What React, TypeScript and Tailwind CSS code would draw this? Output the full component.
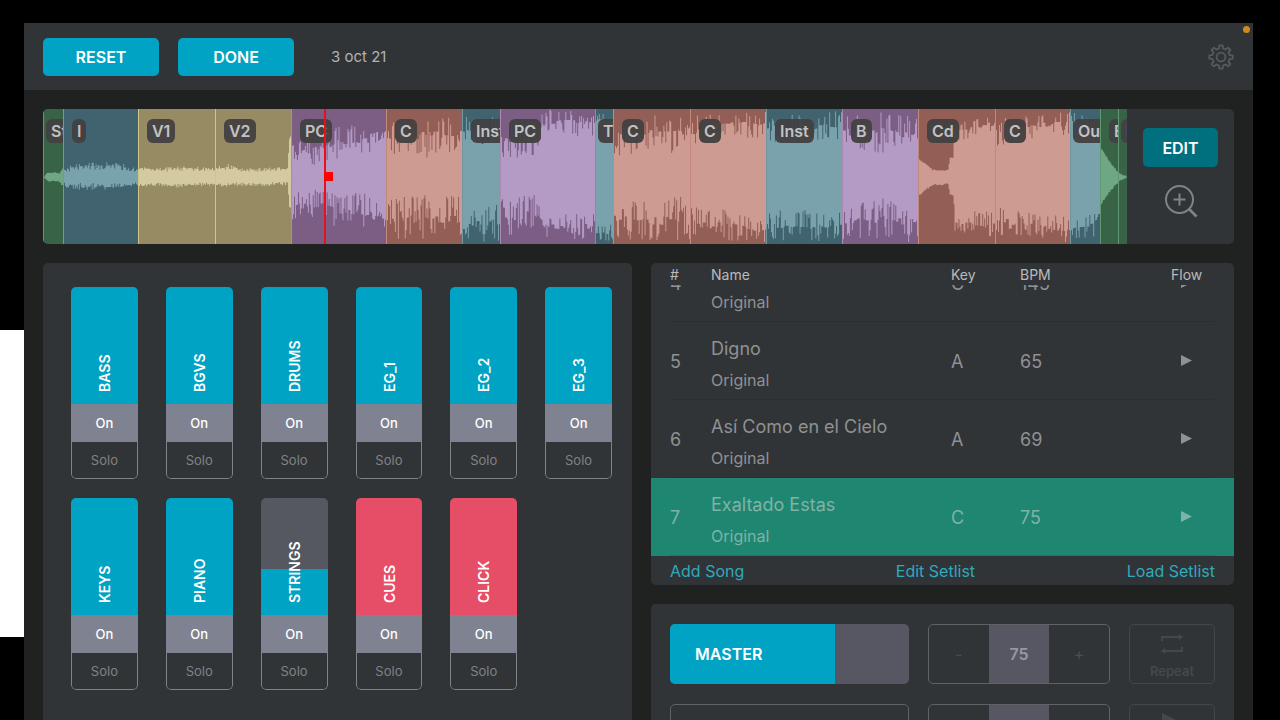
type Range = [number, number];

// one point of the envelope: position inside the section, then the quiet and loud peak above and below the middle
type Point = { x: number; up: Range; down: Range };

type Section = {
  label: string;
  width: number;
  tint: string;
  wave: string;
  narrow?: boolean;
  points: Point[];
};

const MIDDLE = 68;

const tints = {
  green: "border-[#5f9873] bg-[#386346]",
  blue: "border-[#7297a1] bg-[#40636f]",
  sand: "border-[#cfc48c] bg-[#978b63]",
  purple: "border-[#a98bb0] bg-[#7c5e84]",
  red: "border-[#c4877c] bg-[#935e55]",
};

const waves = {
  green: "fill-[#6fa684]",
  blue: "fill-[#79a2ac]",
  sand: "fill-[#d3caa0]",
  purple: "fill-[#b39bc5]",
  red: "fill-[#cd9b92]",
};

const sections: Section[] = [
  { label: "St", width: 20, tint: tints.green, wave: waves.green, narrow: true, points: [
    { x: 0, up: [0, 1], down: [0, 1] },
    { x: 4, up: [4, 5], down: [3, 5] },
    { x: 16, up: [3, 5], down: [3, 5] },
    { x: 20, up: [7, 10], down: [7, 10] },
  ] },
  { label: "I", width: 75, tint: tints.blue, wave: waves.blue, points: [
    { x: 0, up: [5, 10], down: [5, 10] },
    { x: 18, up: [7, 15], down: [6, 14] },
    { x: 56, up: [7, 15], down: [6, 13] },
    { x: 75, up: [5, 9], down: [5, 9] },
  ] },
  { label: "V1", width: 77, tint: tints.sand, wave: waves.sand, points: [
    { x: 0, up: [7, 11], down: [7, 10] },
    { x: 20, up: [5, 9], down: [5, 9] },
    { x: 38, up: [6, 12], down: [7, 11] },
    { x: 77, up: [5, 9], down: [5, 9] },
  ] },
  { label: "V2", width: 76, tint: tints.sand, wave: waves.sand, points: [
    { x: 0, up: [6, 10], down: [6, 10] },
    { x: 12, up: [7, 13], down: [6, 10] },
    { x: 24, up: [5, 9], down: [5, 9] },
    { x: 73, up: [6, 10], down: [5, 10] },
    { x: 74, up: [38, 42], down: [30, 34] },
    { x: 76, up: [38, 42], down: [30, 34] },
  ] },
  { label: "PC", width: 95, tint: tints.purple, wave: waves.purple, points: [
    { x: 0, up: [12, 34], down: [11, 46] },
    { x: 32, up: [12, 44], down: [11, 46] },
    { x: 45, up: [18, 52], down: [14, 50] },
    { x: 80, up: [20, 52], down: [16, 54] },
    { x: 82, up: [34, 52], down: [24, 54] },
    { x: 95, up: [36, 56], down: [30, 56] },
  ] },
  { label: "C", width: 76, tint: tints.red, wave: waves.red, points: [
    { x: 0, up: [24, 54], down: [22, 66] },
    { x: 34, up: [18, 62], down: [18, 64] },
    { x: 76, up: [26, 62], down: [18, 64] },
  ] },
  { label: "Inst", width: 38, tint: tints.blue, wave: waves.blue, points: [
    { x: 0, up: [34, 60], down: [32, 66] },
    { x: 38, up: [28, 60], down: [22, 64] },
  ] },
  { label: "PC", width: 95, tint: tints.purple, wave: waves.purple, points: [
    { x: 0, up: [18, 54], down: [18, 62] },
    { x: 34, up: [20, 54], down: [18, 54] },
    { x: 46, up: [42, 68], down: [36, 62] },
    { x: 95, up: [40, 66], down: [34, 64] },
  ] },
  { label: "Tr", width: 18, tint: tints.blue, wave: waves.blue, narrow: true, points: [
    { x: 0, up: [48, 66], down: [46, 64] },
    { x: 18, up: [46, 64], down: [46, 64] },
  ] },
  { label: "C", width: 77, tint: tints.red, wave: waves.red, points: [
    { x: 0, up: [20, 62], down: [20, 62] },
    { x: 70, up: [24, 62], down: [20, 66] },
    { x: 77, up: [38, 67], down: [32, 66] },
  ] },
  { label: "C", width: 76, tint: tints.red, wave: waves.red, points: [
    { x: 0, up: [26, 62], down: [28, 64] },
    { x: 30, up: [40, 64], down: [32, 64] },
    { x: 76, up: [38, 66], down: [40, 66] },
  ] },
  { label: "Inst", width: 76, tint: tints.blue, wave: waves.blue, points: [
    { x: 0, up: [34, 62], down: [32, 64] },
    { x: 76, up: [36, 67], down: [34, 64] },
  ] },
  { label: "B", width: 76, tint: tints.purple, wave: waves.purple, points: [
    { x: 0, up: [28, 60], down: [24, 62] },
    { x: 36, up: [24, 66], down: [20, 62] },
    { x: 76, up: [22, 60], down: [20, 66] },
  ] },
  { label: "Cd", width: 77, tint: tints.red, wave: waves.red, points: [
    { x: 0, up: [17, 19], down: [17, 19] },
    { x: 9, up: [11, 12], down: [10, 12] },
    { x: 14, up: [6, 8], down: [7, 9] },
    { x: 30, up: [6, 8], down: [6, 8] },
    { x: 31, up: [18, 20], down: [16, 18] },
    { x: 35, up: [18, 20], down: [18, 20] },
    { x: 36, up: [36, 52], down: [36, 54] },
    { x: 77, up: [40, 66], down: [32, 64] },
  ] },
  { label: "C", width: 75, tint: tints.red, wave: waves.red, points: [
    { x: 0, up: [30, 60], down: [26, 60] },
    { x: 28, up: [38, 64], down: [34, 58] },
    { x: 75, up: [40, 66], down: [40, 66] },
  ] },
  { label: "Out", width: 30, tint: tints.blue, wave: waves.blue, narrow: true, points: [
    { x: 0, up: [44, 66], down: [44, 62] },
    { x: 29, up: [36, 62], down: [32, 62] },
    { x: 30, up: [28, 30], down: [26, 28] },
  ] },
  { label: "E", width: 18, tint: tints.green, wave: waves.green, points: [
    { x: 0, up: [28, 30], down: [26, 28] },
    { x: 9, up: [15, 16], down: [14, 16] },
    { x: 18, up: [4, 6], down: [4, 6] },
  ] },
  { label: "E", width: 9, tint: tints.green, wave: waves.green, narrow: true, points: [
    { x: 0, up: [3, 5], down: [3, 5] },
    { x: 9, up: [0, 1], down: [0, 1] },
  ] },
];

const total = sections.reduce((sum, section) => sum + section.width, 0);

const noise = (n: number) => {
  const value = Math.sin(n * 127.1 + 3.7) * 43758.5453;
  return value - Math.floor(value);
};

const mix = (a: Range, b: Range, t: number): Range => [
  a[0] + (b[0] - a[0]) * t,
  a[1] + (b[1] - a[1]) * t,
];

const envelope = (points: Point[], x: number) => {
  const next = Math.max(1, points.findIndex((p) => p.x >= x));
  const a = points[next - 1];
  const b = points[next];
  const t = (x - a.x) / (b.x - a.x);
  return { up: mix(a.up, b.up, t), down: mix(a.down, b.down, t) };
};

const peak = ([low, high]: Range, seed: number) => {
  const spike = noise(seed);
  // most columns stay around the body of the sound, a few dip or jump
  if (spike > 0.78) return low + (high - low) * (0.7 + noise(seed + 9) * 0.3);
  if (spike < 0.28) return low + (high - low) * noise(seed + 5) * 0.35;
  return low + (high - low) * (0.42 + noise(Math.floor(seed / 3)) * 0.2);
};

const wavePath = (section: Section, seed: number) => {
  let top = "";
  let bottom = "";
  for (let x = 0; x < section.width; x++) {
    const { up, down } = envelope(section.points, x + 0.5);
    const y1 = (MIDDLE - peak(up, seed + x)).toFixed(1);
    const y2 = (MIDDLE + peak(down, seed + x + 4000)).toFixed(1);
    top += `L${x} ${y1}L${x + 1} ${y1}`;
    bottom = `L${x + 1} ${y2}L${x} ${y2}` + bottom;
  }
  return `M0 ${MIDDLE}${top}${bottom}Z`;
};

const tracks = [
  { name: "BASS", level: 100, color: "bg-[#00a3c4]" },
  { name: "BGVS", level: 100, color: "bg-[#00a3c4]" },
  { name: "DRUMS", level: 100, color: "bg-[#00a3c4]" },
  { name: "EG_1", level: 100, color: "bg-[#00a3c4]" },
  { name: "EG_2", level: 100, color: "bg-[#00a3c4]" },
  { name: "EG_3", level: 100, color: "bg-[#00a3c4]" },
  { name: "KEYS", level: 100, color: "bg-[#00a3c4]" },
  { name: "PIANO", level: 100, color: "bg-[#00a3c4]" },
  { name: "STRINGS", level: 39, color: "bg-[#00a3c4]" },
  { name: "CUES", level: 100, color: "bg-[#e64d66]" },
  { name: "CLICK", level: 100, color: "bg-[#e64d66]" },
];

const songs = [
  { id: 4, name: "", key: "C", bpm: 145 },
  { id: 5, name: "Digno", key: "A", bpm: 65 },
  { id: 6, name: "Así Como en el Cielo", key: "A", bpm: 69 },
  { id: 7, name: "Exaltado Estas", key: "C", bpm: 75, active: true },
];

const gearPath = () => {
  const parts: string[] = [];
  for (let i = 0; i < 8; i++) {
    const at = (deg: number, r: number) => {
      const a = ((i * 45 + deg - 90) * Math.PI) / 180;
      return `${(13 + Math.cos(a) * r).toFixed(2)} ${(13 + Math.sin(a) * r).toFixed(2)}`;
    };
    parts.push(`${at(-13, 8.8)}L${at(-8, 11.8)}L${at(8, 11.8)}L${at(13, 8.8)}`);
  }
  return `M${parts.join("L")}Z`;
};

const GearIcon = () => (
  <svg viewBox="0 0 26 26" className="size-[26px]" fill="none" stroke="currentColor" strokeWidth="1.8" strokeLinejoin="round">
    <path d={gearPath()} />
    <circle cx="13" cy="13" r="4.4" />
  </svg>
);

const ZoomIcon = () => (
  <svg viewBox="0 0 34 34" className="size-[34px]" fill="none" stroke="currentColor" strokeWidth="2">
    <circle cx="15.5" cy="15.5" r="13.5" />
    <path d="M15.5 9.5v12M9.5 15.5h12" />
    <path d="M25 25l7.5 7.5" strokeWidth="2.6" />
  </svg>
);

const RepeatIcon = () => (
  <svg viewBox="0 0 26 22" className="h-[22px] w-[26px]" fill="none" stroke="currentColor" strokeWidth="2">
    <path d="M3 8V4h18M23 14v4H5" />
    <path d="M20 1l4 3-4 3zM6 15l-4 3 4 3z" fill="currentColor" stroke="none" />
  </svg>
);

const PlayIcon = ({ className }: { className: string }) => (
  <svg viewBox="0 0 12 12" className={className} fill="currentColor">
    <path d="M0 0l12 6-12 6z" />
  </svg>
);

const Header = () => (
  <header className="flex h-[67px] shrink-0 items-center bg-[#313437] px-[19px]">
    <button className="h-[38px] w-[116px] rounded-[5px] bg-[#00a3c4] text-base font-semibold text-white">RESET</button>
    <button className="ml-[19px] h-[38px] w-[116px] rounded-[5px] bg-[#00a3c4] text-base font-semibold text-white">DONE</button>
    <span className="ml-[37px] text-[15px] leading-none text-[#b1b2b4]">3 oct 21</span>
    <button aria-label="Settings" className="ml-auto text-[#57595c]">
      <GearIcon />
    </button>
  </header>
);

const Timeline = () => (
  <section className="flex h-[135px] shrink-0 overflow-hidden rounded-[5px] bg-[#313437]">
    <div className="relative flex flex-1">
      {sections.map((section, i) => (
        <div
          key={i}
          className={`relative overflow-hidden border-l ${section.tint}`}
          style={{ width: `${(section.width / total) * 100}%` }}
        >
          <svg
            viewBox={`0 0 ${section.width} 135`}
            preserveAspectRatio="none"
            className={`absolute inset-0 h-full w-full ${section.wave}`}
          >
            <path d={wavePath(section, i * 137)} />
          </svg>
          <div className={`relative flex pt-2.5 ${section.narrow ? "pl-[2px]" : "pl-2"}`}>
            <span className="rounded-md bg-[#424041]/95 px-[5px] text-base leading-6 font-semibold text-[#c2c2c2]">
              {section.label}
            </span>
          </div>
        </div>
      ))}
      <div className="absolute inset-y-0 left-[25.9%] flex w-[2px] items-center bg-[#e8101c]">
        <div className="size-[9px] shrink-0 bg-[#ff0000]" />
      </div>
    </div>
    <div className="flex w-[107px] flex-col items-center pt-[19px]">
      <button className="h-[39px] w-[75px] rounded-[5px] bg-[#00707f] text-base font-semibold text-white">EDIT</button>
      <button aria-label="Zoom in" className="mt-[17px] text-[#808285]">
        <ZoomIcon />
      </button>
    </div>
  </section>
);

const Track = ({ name, level, color }: { name: string; level: number; color: string }) => (
  <div className="overflow-hidden rounded-[5px]">
    <div className="relative flex h-[117px] flex-col justify-end bg-[#565861]">
      <div className={color} style={{ height: `${level}%` }} />
      <label
        htmlFor={name}
        className="absolute inset-x-0 bottom-3 flex rotate-180 items-center text-sm leading-[67px] font-semibold text-white [writing-mode:vertical-rl]"
      >
        {name}
      </label>
      <input
        id={name}
        type="range"
        defaultValue={level}
        className="absolute inset-0 h-full w-full opacity-0 [direction:rtl] [writing-mode:vertical-lr]"
      />
    </div>
    <button className="block h-[38px] w-full bg-[#7f8291] pt-px text-[13px] font-medium text-white">On</button>
    <button className="block h-[37px] w-full rounded-b-[5px] border border-t-0 border-[#808386] pt-px text-[13px] text-[#808285]">
      Solo
    </button>
  </div>
);

const Mixer = () => (
  <section className="rounded-[5px] bg-[#313437] pt-6 pr-5 pl-7">
    <div className="grid grid-cols-6 gap-x-7 gap-y-[19px]">
      {tracks.map((track) => (
        <Track key={track.name} {...track} />
      ))}
    </div>
  </section>
);

const Setlist = () => (
  <section className="shrink-0 overflow-hidden rounded-[5px] bg-[#313437]">
    <table className="block">
      <thead className="block">
        <tr className="grid h-[22px] grid-cols-[41px_1fr_69px_151px_44px] px-[19px] text-left text-sm leading-[23px] text-[#b9babc]">
          <th className="font-normal">#</th>
          <th className="font-normal">Name</th>
          <th className="font-normal">Key</th>
          <th className="font-normal">BPM</th>
          <th className="font-normal">Flow</th>
        </tr>
      </thead>
      <tbody className="flex h-[271px] flex-col justify-end overflow-hidden text-[#8f9194]">
        {songs.map((song) => (
          <tr
            key={song.id}
            className={`grid h-[78px] shrink-0 grid-cols-[41px_1fr_69px_151px_44px] grid-rows-[78px] px-[19px] text-lg leading-[80px] ${
              song.active ? "bg-[#1f8672] text-[#7fb3a6]" : ""
            }`}
          >
            <td className="border-b border-black/10">{song.id}</td>
            <td className="border-b border-black/10 pt-[11px]">
              <div className="h-8 leading-8">{song.name}</div>
              <div className="text-base leading-[30px]">Original</div>
            </td>
            <td className="border-b border-black/10">{song.key}</td>
            <td className="border-b border-black/10">{song.bpm}</td>
            <td className="flex items-center border-b border-black/10 pl-2.5">
              <button aria-label="Flow">
                <PlayIcon className="size-[11px]" />
              </button>
            </td>
          </tr>
        ))}
      </tbody>
    </table>
    <nav className="flex h-[29px] items-center justify-between px-[19px] text-base text-[#2fa9bd]">
      <a href="#add">Add Song</a>
      <a href="#edit">Edit Setlist</a>
      <a href="#load">Load Setlist</a>
    </nav>
  </section>
);

const Stepper = ({ label, value }: { label: string; value: string }) => (
  <div className="grid h-[60px] grid-cols-3 overflow-hidden rounded-[5px] border border-[#5f6265]">
    <button className="text-base text-[#4b4d50]">-</button>
    <input
      aria-label={label}
      defaultValue={value}
      className="w-full bg-[#565762] text-center text-base font-semibold text-[#97989f]"
    />
    <button className="text-base text-[#4b4d50]">+</button>
  </div>
);

const Master = () => (
  <section className="flex-1 rounded-[5px] bg-[#313437] px-[19px] pt-5">
    <div className="grid grid-cols-[239fr_182fr_86fr] gap-x-[19px] gap-y-5">
      <div className="relative flex h-[60px] overflow-hidden rounded-[5px] bg-[#565762]">
        <label htmlFor="master" className="flex w-[69%] items-center bg-[#00a3c4] pl-[25px] text-base font-semibold text-white">
          MASTER
        </label>
        <input id="master" type="range" defaultValue={69} className="absolute inset-0 h-full w-full opacity-0" />
      </div>
      <Stepper label="Tempo" value="75" />
      <button className="flex h-[60px] flex-col items-center justify-between rounded-[5px] border border-[#45484b] pt-2 pb-1 text-[13px] leading-4 font-semibold text-[#45484b]">
        <RepeatIcon />
        Repeat
      </button>
      <button aria-label="Pads" className="h-[60px] rounded-[5px] border border-[#5f6265]" />
      <Stepper label="Key" value="" />
      <button aria-label="Play" className="flex h-[60px] justify-center rounded-[5px] border border-[#45484b] pt-2 text-[#45484b]">
        <PlayIcon className="size-5" />
      </button>
    </div>
  </section>
);

const App = () => {
  return (
    <div className="flex h-screen overflow-hidden bg-black font-['Inter',sans-serif]">
      <aside className="w-6 shrink-0 pt-[330px]">
        <div className="h-[307px] bg-white" />
      </aside>
      <main className="relative mt-[23px] mr-[27px] flex min-w-0 flex-1 flex-col bg-[#202121]">
        <Header />
        <div className="absolute top-[3px] right-[3px] size-[7px] rounded-full bg-[#d08a1e]" />
        <div className="flex flex-1 flex-col gap-[19px] px-[19px] pt-[19px]">
          <Timeline />
          <div className="grid flex-1 grid-cols-[589fr_583fr] gap-[19px]">
            <Mixer />
            <div className="flex flex-col gap-[19px]">
              <Setlist />
              <Master />
            </div>
          </div>
        </div>
      </main>
    </div>
  );
};

export default App;
